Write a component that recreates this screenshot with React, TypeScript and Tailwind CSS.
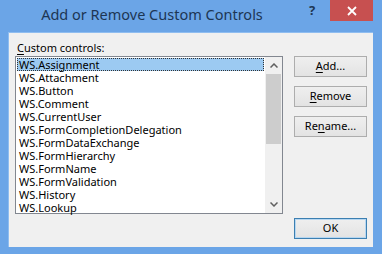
import React from 'react'

const items = [
  'WS.Assignment',
  'WS.Attachment',
  'WS.Button',
  'WS.Comment',
  'WS.CurrentUser',
  'WS.FormCompletionDelegation',
  'WS.FormDataExchange',
  'WS.FormHierarchy',
  'WS.FormName',
  'WS.FormValidation',
  'WS.History',
  'WS.Lookup',
]

function DlgButton({ children, isDefault }: { children: React.ReactNode; isDefault?: boolean }) {
  return (
    <button
      className={
        'w-[73px] h-[21px] flex items-center justify-center text-[11px] text-black bg-gradient-to-b from-[#efefef] to-[#e3e3e3] border ' +
        (isDefault ? 'border-[#3c7fb1] shadow-[inset_0_0_0_1px_#b7d7f1]' : 'border-[#adadad]')
      }
    >
      {children}
    </button>
  )
}

export default function App() {
  return (
    <div
      className="w-[382px] h-[254px] bg-[#6ba5e7] flex flex-col text-black"
      style={{ fontFamily: '"Noto Sans", "Open Sans", sans-serif' }}
    >
      {/* title bar */}
      <div className="h-[32px] flex items-start shrink-0">
        <div className="flex-1 h-full flex items-center justify-center pl-[4px] text-[14.5px] text-[#1d3654] pb-[2px]">
          Add or Remove Custom Controls
        </div>
        <div className="w-[30px] h-[22px] flex items-center justify-center text-[13px] font-bold text-[#1d3654] pr-[6px]">?</div>
        <div className="w-[43px] h-[21px] bg-[#c75050] flex items-center justify-center mr-[9px]">
          <svg width="10" height="10" viewBox="0 0 10 10">
            <path d="M1 1 L9 9 M9 1 L1 9" stroke="white" strokeWidth="1.8" />
          </svg>
        </div>
      </div>

      {/* client area */}
      <div className="flex-1 ml-[8px] mr-[9px] mb-[7px] bg-[#f0f0f0] border-l border-t border-[#8fbdf0] flex flex-col px-[6px] pt-[6px]">
        <div className="h-[17px] text-[11px] leading-[17px] pl-[2px]">
          <span className="underline underline-offset-2">C</span>ustom controls:
        </div>
        <div className="flex items-start gap-[11px]">
          {/* listbox */}
          <div className="w-[268px] h-[158px] bg-white border border-[#828790] flex">
            <div className="flex-1 pt-px pl-px">
              {items.map((it, i) => (
                <div
                  key={it}
                  className={
                    'h-[13px] leading-[13px] text-[11px] pl-[2px] whitespace-nowrap ' +
                    (i === 0 ? 'bg-[#9ccaf2] outline outline-1 outline-dotted outline-[#333] -outline-offset-1 mr-px' : '')
                  }
                >
                  {it}
                </div>
              ))}
            </div>
            {/* scrollbar */}
            <div className="w-[17px] h-full bg-[#f0f0f0] flex flex-col items-center">
              <div className="h-[17px] w-full flex items-center justify-center">
                <svg width="8" height="5" viewBox="0 0 8 5">
                  <path d="M0.5 4.5 L4 1 L7.5 4.5" stroke="#606060" strokeWidth="1.5" fill="none" />
                </svg>
              </div>
              <div className="w-[15px] h-[70px] bg-[#cdcdcd]" />
              <div className="flex-1" />
              <div className="h-[17px] w-full flex items-center justify-center">
                <svg width="8" height="5" viewBox="0 0 8 5">
                  <path d="M0.5 0.5 L4 4 L7.5 0.5" stroke="#606060" strokeWidth="1.5" fill="none" />
                </svg>
              </div>
            </div>
          </div>
          {/* buttons */}
          <div className="flex flex-col gap-[9px]">
            <DlgButton>
              <span className="underline underline-offset-2">A</span>dd...
            </DlgButton>
            <DlgButton>
              <span className="underline underline-offset-2">R</span>emove
            </DlgButton>
            <DlgButton>
              Re<span className="underline underline-offset-2">n</span>ame...
            </DlgButton>
          </div>
        </div>
        <div className="flex justify-end mt-[4px]">
          <DlgButton isDefault>OK</DlgButton>
        </div>
      </div>
    </div>
  )
}
